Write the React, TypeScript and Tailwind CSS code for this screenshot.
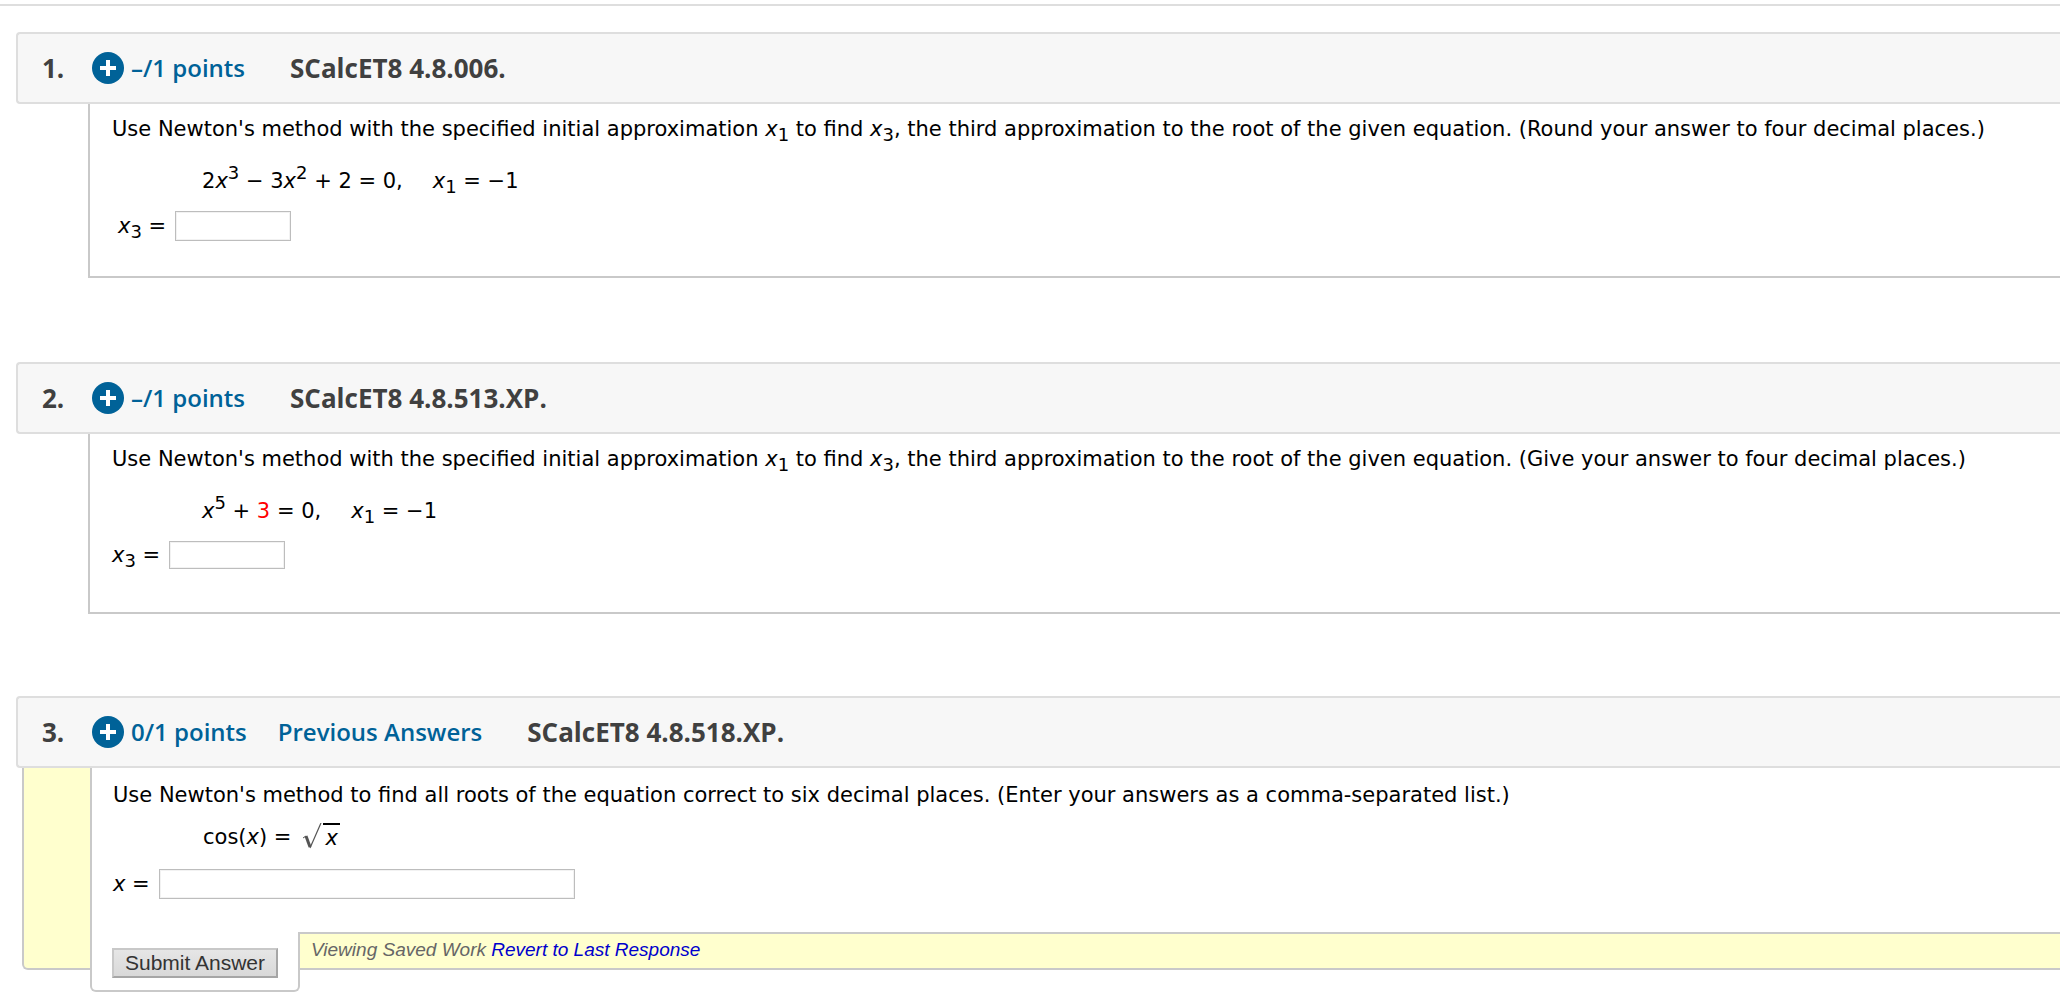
import type { ReactNode } from "react";

function PlusIcon() {
  return (
    <svg viewBox="0 0 32 32" className="size-8" aria-hidden="true">
      <circle cx="16" cy="16" r="16" fill="#006298" />
      <path d="M16 8v16M8 16h16" stroke="#fff" strokeWidth="4" />
    </svg>
  );
}

function QuestionHeader({
  number,
  points,
  title,
  previous,
}: {
  number: string;
  points: string;
  title: string;
  previous?: boolean;
}) {
  return (
    <header className="ml-4 flex h-[72px] items-center rounded-l-[4px] border-2 border-r-0 border-[#dedede] bg-[#f7f7f7] pl-6 font-['Open_Sans',sans-serif] text-[#404040]">
      <span className="w-[50px] text-[26px] font-bold">{number}</span>
      <button
        type="button"
        className="flex items-center gap-[7px] text-2xl font-semibold text-[#006298]"
      >
        <PlusIcon />
        {points}
      </button>
      {previous && (
        <a href="#previous" className="ml-[31px] text-2xl font-semibold text-[#006298]">
          Previous Answers
        </a>
      )}
      <h2 className="ml-[45px] text-[26px] font-bold">{title}</h2>
    </header>
  );
}

function Sub({ children }: { children: ReactNode }) {
  return <sub className="text-lg leading-none">{children}</sub>;
}

function Sup({ children }: { children: ReactNode }) {
  return <sup className="text-lg leading-none">{children}</sup>;
}

function X1() {
  return (
    <>
      <i>x</i>
      <Sub>1</Sub>
    </>
  );
}

function X3() {
  return (
    <>
      <i>x</i>
      <Sub>3</Sub>
    </>
  );
}

const inputStyle =
  "border border-[#bdbdbd] bg-white px-1 shadow-[inset_0_0_0_1px_#f2f2f2] outline-none";

export default function App() {
  return (
    <main className="min-h-screen overflow-x-hidden bg-white pt-1 font-['DejaVu_Sans',sans-serif] text-[21px] leading-7 text-black">
      <div className="mb-[26px] border-t-2 border-[#dedede]" />

      <section className="mb-[84px]">
        <QuestionHeader number="1." points="–/1 points" title="SCalcET8 4.8.006." />
        <div className="ml-[88px] border-b-2 border-l-2 border-[#c9c9c9] pt-[11px] pb-[35px] pl-[22px]">
          <p>
            Use Newton's method with the specified initial approximation <X1 /> to find{" "}
            <X3 />, the third approximation to the root of the given equation. (Round your
            answer to four decimal places.)
          </p>
          <p className="mt-6 ml-[90px]">
            2<i>x</i>
            <Sup>3</Sup> − 3<i>x</i>
            <Sup>2</Sup> + 2 = 0,<span className="ml-[30px]" />
            <X1 /> = −1
          </p>
          <div className="mt-4 ml-[6px] flex items-center gap-[9px]">
            <label htmlFor="answer-1">
              <X3 /> =
            </label>
            <input id="answer-1" type="text" className={`${inputStyle} h-[30px] w-[116px]`} />
          </div>
        </div>
      </section>

      <section className="mb-[82px]">
        <QuestionHeader number="2." points="–/1 points" title="SCalcET8 4.8.513.XP." />
        <div className="ml-[88px] border-b-2 border-l-2 border-[#c9c9c9] pt-[11px] pb-[43px] pl-[22px]">
          <p>
            Use Newton's method with the specified initial approximation <X1 /> to find{" "}
            <X3 />, the third approximation to the root of the given equation. (Give your
            answer to four decimal places.)
          </p>
          <p className="mt-6 ml-[90px]">
            <i>x</i>
            <Sup>5</Sup> + <span className="text-[#ff0000]">3</span> = 0,
            <span className="ml-[30px]" />
            <X1 /> = −1
          </p>
          <div className="mt-4 flex items-center gap-[9px]">
            <label htmlFor="answer-2">
              <X3 /> =
            </label>
            <input id="answer-2" type="text" className={`${inputStyle} h-7 w-[116px]`} />
          </div>
        </div>
      </section>

      <section>
        <QuestionHeader number="3." points="0/1 points" title="SCalcET8 4.8.518.XP." previous />
        <div className="ml-[22px] flex">
          <div className="mb-[22px] w-[68px] shrink-0 rounded-bl-[6px] border-b-2 border-l-2 border-[#c9c9c9] bg-[#ffffce]" />
          <div className="min-w-0 flex-1">
            <div className="border-l-2 border-[#c9c9c9] pt-[13px] pb-[33px] pl-[21px]">
              <p>
                Use Newton's method to find all roots of the equation correct to six decimal
                places. (Enter your answers as a comma-separated list.)
              </p>
              <p className="mt-[14px] ml-[90px] flex">
                <span>
                  cos(<i>x</i>) =
                </span>
                <svg
                  viewBox="0 0 20 28"
                  className="ml-[11px] h-7 w-5"
                  fill="none"
                  stroke="#555"
                  aria-hidden="true"
                >
                  <path d="M1 15l3-2" strokeWidth="1" />
                  <path d="M4 13l4 11" strokeWidth="3" />
                  <path d="M8 25L19 0" strokeWidth="1.2" />
                </svg>
                <span className="ml-px border-t-2 border-black px-[2px] leading-[26px]">
                  <i>x</i>
                </span>
              </p>
              <div className="mt-[18px] flex items-center gap-[9px]">
                <label htmlFor="answer-3">
                  <i>x</i> =
                </label>
                <input id="answer-3" type="text" className={`${inputStyle} h-[30px] w-[416px]`} />
              </div>
            </div>
            <div className="flex items-start font-['Liberation_Sans',sans-serif]">
              <div className="h-[60px] shrink-0 rounded-b-[6px] border-2 border-t-0 border-[#c9c9c9] pt-4 pr-5 pl-5">
                <button
                  type="button"
                  className="h-[30px] w-[166px] border-2 border-t-[#c8c8c8] border-r-[#a6a6a6] border-b-[#a6a6a6] border-l-[#c8c8c8] bg-linear-to-b from-[#e6e6e6] to-[#d9d9d9] text-[21px] leading-[26px] text-[#333]"
                >
                  Submit Answer
                </button>
              </div>
              <div className="h-[38px] flex-1 border-y-2 border-[#c9c9c9] bg-[#ffffce] pl-[11px] text-[19px] leading-8 text-[#666] italic">
                Viewing Saved Work{" "}
                <a href="#revert" className="text-[#0000cc]">
                  Revert to Last Response
                </a>
              </div>
            </div>
          </div>
        </div>
      </section>
    </main>
  );
}
